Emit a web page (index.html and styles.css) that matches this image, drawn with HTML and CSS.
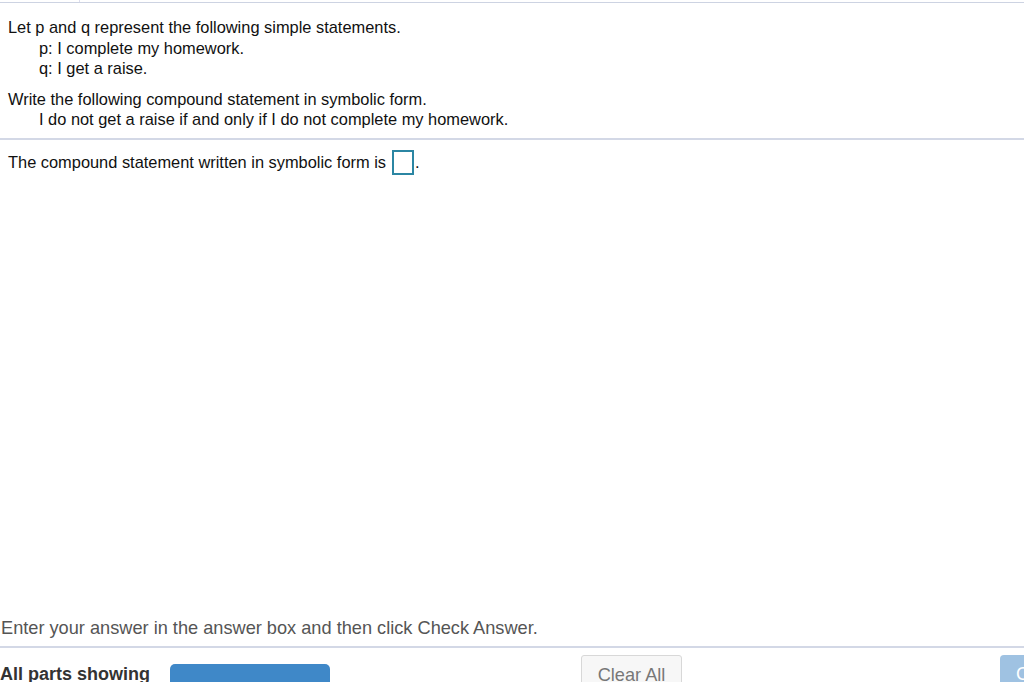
FILE: index.html
```html
<!DOCTYPE html>
<html>
<head>
<meta charset="utf-8">
<link rel="stylesheet" href="styles.css">
</head>
<body>
<div class="page">
  <div class="topline"><span class="tick"></span></div>
  <div class="question">
    <p class="line">Let p and q represent the following simple statements.</p>
    <p class="line indent">p: I complete my homework.</p>
    <p class="line indent">q: I get a raise.</p>
    <p class="line gap">Write the following compound statement in symbolic form.</p>
    <p class="line indent">I do not get a raise if and only if I do not complete my homework.</p>
  </div>
  <div class="answer">
    <span>The compound statement written in symbolic form is</span><span class="box"></span><span>.</span>
  </div>
  <div class="spacer"></div>
  <div class="hint">Enter your answer in the answer box and then click Check Answer.</div>
  <div class="footer">
    <span class="parts">All parts showing</span>
    <span class="bluebar"></span>
    <span class="clear">Clear All</span>
    <span class="check">C</span>
  </div>
</div>
</body>
</html>
```

FILE: styles.css
```css
* { box-sizing: border-box; }
html, body { margin: 0; padding: 0; background: #fff; }
body { font-family: "Liberation Sans", Arial, sans-serif; color: #111; overflow: hidden; }
.page { width: 1024px; height: 682px; display: flex; flex-direction: column; }
.topline { height: 3px; border-bottom: 1px solid #cdd3e2; position: relative; }
.tick { position: absolute; left: 79px; top: 0; width: 1px; height: 2px; background: #dde; }
.question { padding: 14px 0 8px 8px; border-bottom: 2px solid #d3d8e6; }
.line { margin: 0; font-size: 16.4px; line-height: 20.5px; white-space: nowrap; }
.indent { padding-left: 31px; }
.gap { margin-top: 10px; }
.answer { display: flex; align-items: center; padding: 9px 0 0 8px; font-size: 16.4px; height: 36px; white-space: nowrap; }
.box { display: inline-block; width: 22px; height: 25px; border: 2px solid #2b86a3; margin-left: 6px; margin-right: 1px; }
.spacer { flex: 1; }
.hint { font-size: 18.2px; color: #555; padding-left: 1px; line-height: 20px; padding-bottom: 8px; white-space: nowrap; }
.footer { border-top: 2px solid #d3d8e6; height: 36px; display: flex; align-items: flex-start; white-space: nowrap; }
.parts { font-weight: bold; font-size: 18px; color: #333; margin-top: 16px; line-height: 20px; width: 150px; flex: none; }
.bluebar { width: 160px; height: 30px; background: #3f88c8; border-radius: 5px; margin-left: 20px; margin-top: 16px; flex: none; }
.clear { margin-left: 251px; margin-top: 7px; width: 101px; height: 36px; border: 1px solid #d8d8d8; border-radius: 3px; background: #f7f7f7; color: #777; font-size: 18.2px; text-align: center; padding-top: 9px; flex: none; }
.check { margin-left: 318px; margin-top: 7px; width: 60px; height: 36px; background: #9fc2e2; border-radius: 4px 0 0 0; color: #fff; font-size: 18.2px; padding: 9px 0 0 16px; flex: none; }
```
